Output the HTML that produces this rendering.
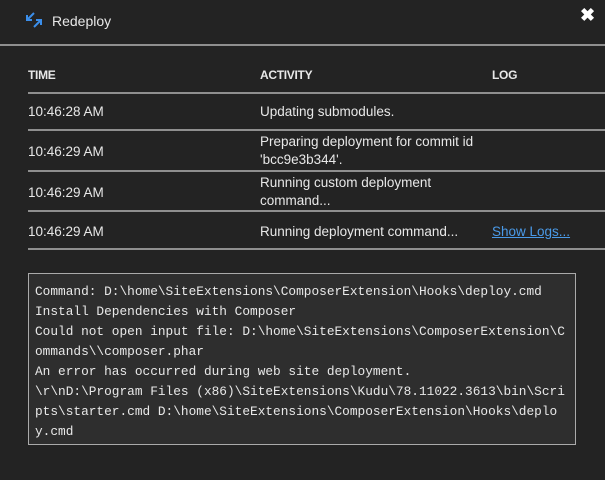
<!DOCTYPE html>
<html><head><meta charset="utf-8"><style>
body{margin:0;width:605px;height:480px;background:#232323;color:#e8e8e8;font-family:"Liberation Sans",sans-serif;position:relative;overflow:hidden}
.a{position:absolute;white-space:nowrap;font-size:13.5px;line-height:18px}
.h{font-weight:bold;font-size:12px;letter-spacing:-0.3px}
.l{position:absolute;left:28px;right:0;height:2px;background:#8f8f8f}
.box{position:absolute;left:28px;top:273px;width:546px;height:170px;border:1px solid #aaa;background:#2e2e2e}
pre{margin:0;position:absolute;left:6px;top:8px;font-family:"Liberation Mono",monospace;font-size:12.8px;line-height:20px;color:#e8e8e8}
a{color:#4a9ae8;text-decoration:underline}
</style></head><body>
<svg style="position:absolute;left:25px;top:11px" width="18" height="18" viewBox="0 0 18 18" fill="none" stroke="#3b8eea" stroke-width="2"><path d="M9 2 L2 9 M2 4 V9 H7 M9 16 L16 9 M16 14 V9 H11"/></svg>
<div class="a" style="left:52px;top:12px;font-size:14px">Redeploy</div>
<div class="a" style="left:580px;top:6px;font-size:18px;font-weight:bold;color:#fff">✖</div>
<div class="l" style="left:0;top:44px"></div>
<div class="a h" style="left:28px;top:66px">TIME</div>
<div class="a h" style="left:260px;top:66px">ACTIVITY</div>
<div class="a h" style="left:492px;top:66px">LOG</div>
<div class="l" style="top:92px"></div>
<div class="a" style="left:28px;top:103px">10:46:28 AM</div>
<div class="a" style="left:260px;top:103px">Updating submodules.</div>
<div class="l" style="top:129px"></div>
<div class="a" style="left:28px;top:143px">10:46:29 AM</div>
<div class="a" style="left:260px;top:133px">Preparing deployment for commit id<br>'bcc9e3b344'.</div>
<div class="l" style="top:170px"></div>
<div class="a" style="left:28px;top:184px">10:46:29 AM</div>
<div class="a" style="left:260px;top:174px">Running custom deployment<br>command...</div>
<div class="l" style="top:210px"></div>
<div class="a" style="left:28px;top:223px">10:46:29 AM</div>
<div class="a" style="left:260px;top:223px">Running deployment command...</div>
<div class="a" style="left:492px;top:223px"><a>Show Logs...</a></div>
<div class="l" style="top:248px"></div>
<div class="box"><pre>Command: D:\home\SiteExtensions\ComposerExtension\Hooks\deploy.cmd
Install Dependencies with Composer
Could not open input file: D:\home\SiteExtensions\ComposerExtension\C
ommands\\composer.phar
An error has occurred during web site deployment.
\r\nD:\Program Files (x86)\SiteExtensions\Kudu\78.11022.3613\bin\Scri
pts\starter.cmd D:\home\SiteExtensions\ComposerExtension\Hooks\deplo
y.cmd</pre></div>
</body></html>
